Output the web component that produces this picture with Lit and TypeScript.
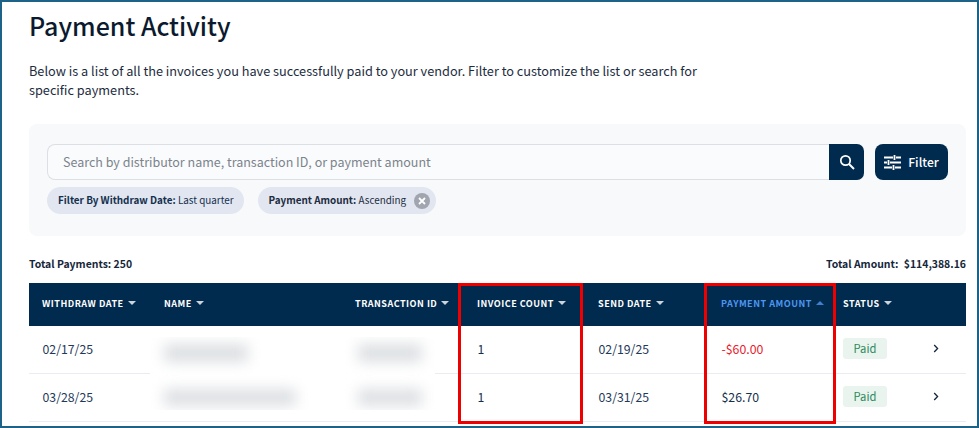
import { LitElement, html, css, svg } from "lit";
import { customElement } from "lit/decorators.js";

const caret = (up = false) => html`<svg class="caret" width="8" height="4" viewBox="0 0 8 4"><path d=${up ? "M0 4 L4 0 L8 4Z" : "M0 0 L8 0 L4 4Z"} fill="currentColor"/></svg>`;
const chevron = html`<svg width="6" height="9" viewBox="0 0 6 9"><path d="M1.2 1 L4.6 4.5 L1.2 8" fill="none" stroke="#14263c" stroke-width="1.3"/></svg>`;

const cols = [
  ["WITHDRAW DATE", false], ["NAME", false], ["TRANSACTION ID", false], ["INVOICE COUNT", false],
  ["SEND DATE", false], ["PAYMENT AMOUNT", true], ["STATUS", false],
] as const;

const rows = [
  { w: "02/17/25", s: "02/19/25", a: "-$60.00", neg: true },
  { w: "03/28/25", s: "03/31/25", a: "$26.70", neg: false },
];

@customElement("app-root")
export class AppRoot extends LitElement {
  static styles = css`
    :host { display: block; }
    * { box-sizing: border-box; }
    .frame {
      position: relative; height: 428px; overflow: hidden; background: #fff;
      border: 2px solid #1f6287; padding: 0 11px 0 27px;
      font-family: "Noto Sans CJK SC", "Noto Sans", sans-serif; color: #10243c;
    }
    h1 { margin: 0; padding-top: 4px; font-size: 25px; line-height: 38px; font-weight: 500; color: #0b1a2e; }
    .intro { margin: 17px 0 0; width: 680px; font-size: 12.72px; line-height: 19px; color: #1d2c40; }
    .panel { margin-top: 25px; height: 112px; background: #f8f9fb; border-radius: 8px; padding: 20px 18px; }
    .search { display: flex; align-items: stretch; height: 36px; }
    .input {
      flex: 1; display: flex; align-items: center; padding: 0 0 2px 15px; background: #fafbfc;
      border: 1px solid #dcdfe3; border-right: 0; border-radius: 8px 0 0 8px;
      font-size: 12.5px; color: #7b838d;
    }
    .sbtn { width: 35px; background: #002a4e; border-radius: 0 7px 7px 0; display: flex; align-items: center; justify-content: center; }
    .fbtn {
      margin-left: 11px; width: 73px; background: #002a4e; border-radius: 8px; color: #fff;
      display: flex; align-items: center; justify-content: center; gap: 7px; font-size: 12.2px; font-weight: 500;
    }
    .chips { display: flex; gap: 14px; margin-top: 7px; }
    .chip {
      height: 27px; border-radius: 14px; background: #e1e6f0; display: flex; align-items: center;
      padding: 0 6px 0 11px; font-size: 9.9px; color: #1d2c40; gap: 8px;
    }
    .chip span { padding-bottom: 2px; }
    .chip.plain { padding-right: 10px; }
    .chip b { font-weight: 600; }
    .totals { display: flex; justify-content: space-between; margin-top: 20px; font-size: 10.45px; line-height: 16px; font-weight: 600; color: #16263a; }
    .totals .amt { margin-left: 3px; padding-bottom: 0; }
    .table { margin-top: 11px; }
    .row { display: grid; grid-template-columns: 122px 191px 122px 121px 123px 122px 1fr; }
    .head { height: 43px; background: #002a4e; align-items: center; }
    .th { padding: 0 0 3px 13px; font-size: 9.05px; font-weight: 600; letter-spacing: 0.5px; color: #fff; display: flex; align-items: center; gap: 4px; white-space: nowrap; }
    .th.active { color: #4f96f0; }
    .caret { opacity: 0.8; }
    .body { height: 48px; border-bottom: 1px solid #e9ecf0; align-items: center; }
    .td { padding: 0 0 2px 13.5px; font-size: 12.3px; color: #1f3a5a; display: flex; align-items: center; }
    .neg { color: #e8202c; }
    .plain { color: #14304e; }
    .status { justify-content: space-between; padding: 0 27px 2px 13px; }
    .paid { width: 44px; height: 21px; padding-bottom: 2px; border-radius: 3px; background: #e9f4ef; color: #2f8a5b; font-size: 11.2px; display: flex; align-items: center; justify-content: center; }
    .redact { position: absolute; left: 148px; top: 335px; width: 285px; height: 73px; background: #fff; overflow: hidden; }
    .blob { position: absolute; background: #dcdfe2; filter: blur(7px); }
    .box { position: absolute; border: 3.5px solid #ee0000; top: 281px; height: 141px; }
  `;

  render() {
    return html`<div class="frame">
      <h1>Payment Activity</h1>
      <p class="intro">Below is a list of all the invoices you have successfully paid to your vendor. Filter to customize the list or search for specific payments.</p>
      <div class="panel">
        <div class="search">
          <div class="input">Search by distributor name, transaction ID, or payment amount</div>
          <div class="sbtn"><svg width="16" height="16" viewBox="0 0 16 16" fill="none" stroke="#fff" stroke-width="1.7"><circle cx="6.5" cy="6.5" r="4.7"/><path d="M10 10 L15 15" stroke-width="2"/></svg></div>
          <div class="fbtn">
            <svg width="17" height="15" viewBox="0 0 17 15" stroke="#fff" stroke-width="1.8" fill="none">${svg`<path d="M0 2.5H9M12 2.5H17M10.5 0V5M0 7.5H3M6 7.5H17M4.5 5V10M0 12.5H8M11 12.5H17M9.5 10V15"/>`}</svg>
            <span>Filter</span>
          </div>
        </div>
        <div class="chips">
          <div class="chip plain"><span><b>Filter By Withdraw Date:</b> Last quarter</span></div>
          <div class="chip"><span><b>Payment Amount:</b> Ascending</span>
            <svg width="16" height="16" viewBox="0 0 16 16"><circle cx="8" cy="8" r="8" fill="#a0a5b0"/><path d="M5 5L11 11M11 5L5 11" stroke="#fff" stroke-width="1.8"/></svg>
          </div>
        </div>
      </div>
      <div class="totals"><span>Total Payments: 250</span><span>Total Amount: <span class="amt">$114,388.16</span></span></div>
      <div class="table">
        <div class="row head">
          ${cols.map(([t, a]) => html`<div class="th ${a ? "active" : ""}">${t} ${caret(a)}</div>`)}
        </div>
        ${rows.map((r) => html`<div class="row body">
          <div class="td">${r.w}</div><div class="td"></div><div class="td"></div>
          <div class="td plain">1</div>
          <div class="td">${r.s}</div>
          <div class="td ${r.neg ? "neg" : "plain"}">${r.a}</div>
          <div class="td status"><div class="paid">Paid</div>${chevron}</div>
        </div>`)}
      </div>
      <div class="redact">
        <div class="blob" style="left:14px;top:7px;width:84px;height:18px"></div>
        <div class="blob" style="left:208px;top:7px;width:64px;height:18px"></div>
        <div class="blob" style="left:14px;top:52px;width:132px;height:17px"></div>
        <div class="blob" style="left:208px;top:52px;width:64px;height:17px"></div>
      </div>
      <div class="box" style="left:456px;width:125px"></div>
      <div class="box" style="left:702px;width:132px"></div>
    </div>`;
  }
}
